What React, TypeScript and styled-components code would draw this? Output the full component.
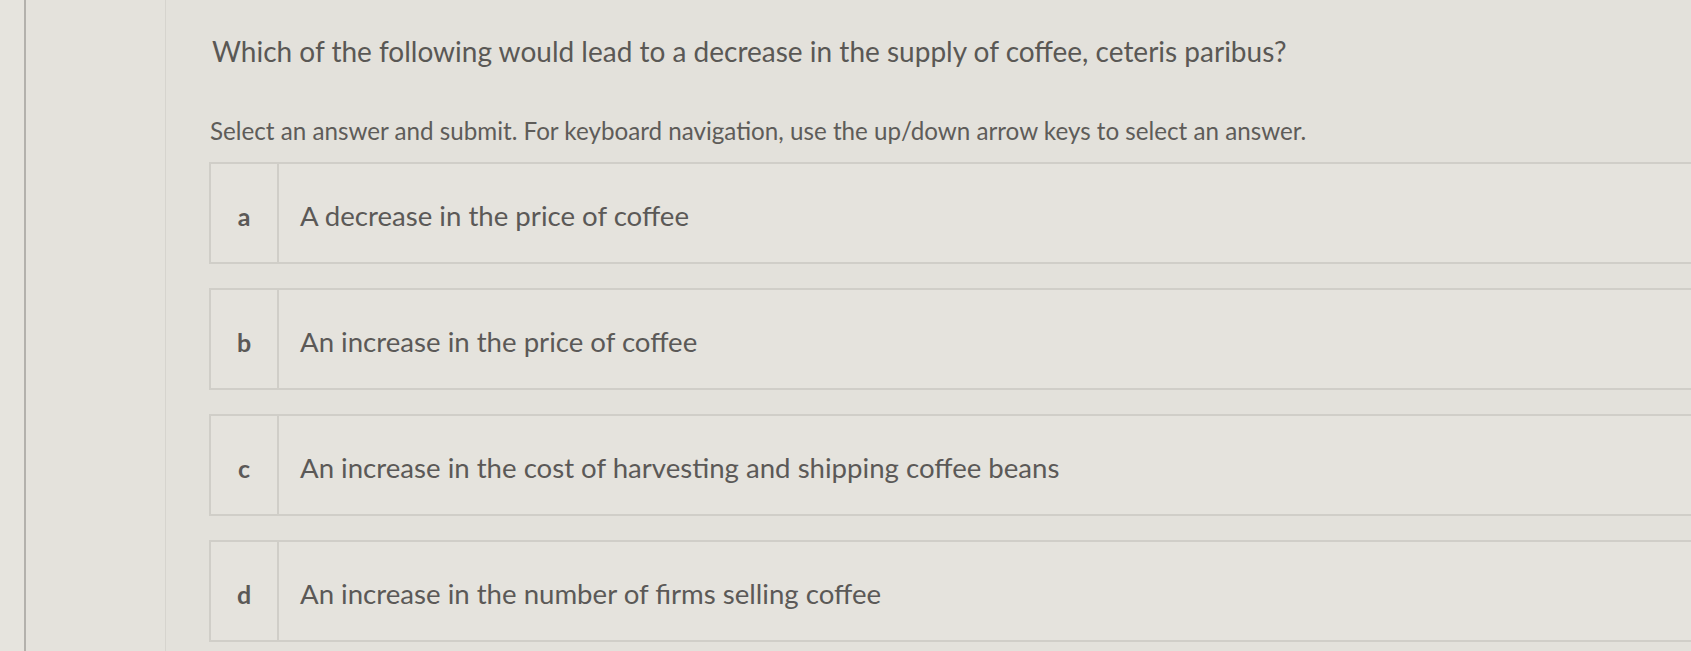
import React from "react";
import styled, { createGlobalStyle } from "styled-components";

const Global = createGlobalStyle`
  html, body { margin: 0; padding: 0; background: #e3e1db; }
  body { font-family: Lato, "Open Sans", sans-serif; color: #5b5957; }
`;

const Page = styled.div`
  display: flex;
  width: 1691px;
  height: 651px;
  overflow: hidden;
  background: #e3e1db;
`;

const Rail = styled.div`
  width: 24px;
  flex: none;
  border-right: 2px solid #b3b1ac;
  background: #e6e4de;
`;

const Side = styled.div`
  width: 139px;
  flex: none;
  border-right: 1px solid #d6d4ce;
  background: #e4e2dc;
`;

const Main = styled.main`
  flex: 1;
  min-width: 0;
  padding: 34px 0 0 43px;
  overflow: hidden;
`;

const Question = styled.h1`
  margin: 0 0 0 3px;
  font-size: 28px;
  font-weight: 400;
  line-height: 34px;
  color: #5a5855;
`;

const Hint = styled.p`
  margin: 48px 0 0 1px;
  font-size: 24.2px;
  line-height: 30px;
  color: #5e5c59;
`;

const Options = styled.div`
  margin-top: 16px;
  display: flex;
  flex-direction: column;
  gap: 24px;
  width: calc(100% + 20px);
`;

const Option = styled.div`
  display: flex;
  height: 98px;
  border: 2px solid #d0cec8;
  background: #e5e3dd;
`;

const Letter = styled.div`
  width: 66px;
  flex: none;
  display: flex;
  align-items: center;
  justify-content: center;
  padding-top: 5px;
  border-right: 2px solid #d0cec8;
  font-size: 25px;
  font-weight: 700;
  color: #5b5957;
`;

const Answer = styled.div`
  display: flex;
  align-items: center;
  padding: 5px 0 0 21px;
  font-size: 27.6px;
  color: #5b5957;
`;

const answers = [
  ["a", "A decrease in the price of coffee"],
  ["b", "An increase in the price of coffee"],
  ["c", "An increase in the cost of harvesting and shipping coffee beans"],
  ["d", "An increase in the number of firms selling coffee"],
];

export default function App() {
  return (
    <>
      <Global />
      <Page>
        <Rail />
        <Side />
        <Main>
          <Question>
            Which of the following would lead to a decrease in the supply of coffee, ceteris paribus?
          </Question>
          <Hint>
            Select an answer and submit. For keyboard navigation, use the up/down arrow keys to select an answer.
          </Hint>
          <Options role="radiogroup">
            {answers.map(([l, t]) => (
              <Option key={l} role="radio" aria-checked="false">
                <Letter>{l}</Letter>
                <Answer>{t}</Answer>
              </Option>
            ))}
          </Options>
        </Main>
      </Page>
    </>
  );
}
